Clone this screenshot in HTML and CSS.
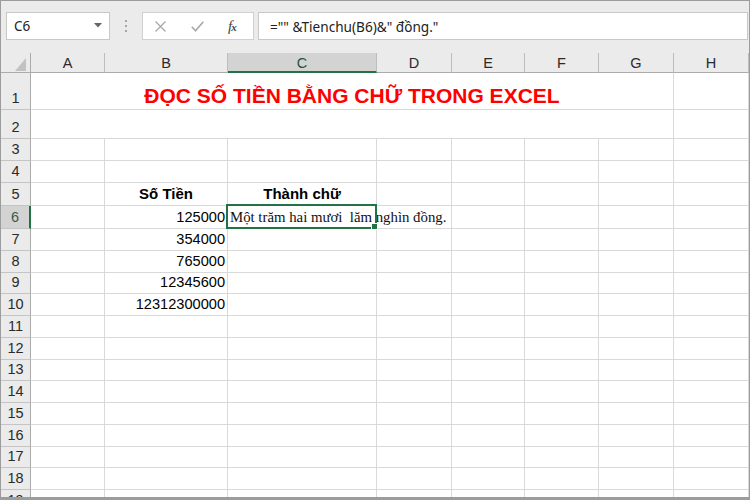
FILE: index.html
```html
<!DOCTYPE html>
<html lang="vi">
<head>
<meta charset="utf-8">
<title>Excel</title>
<link rel="stylesheet" href="styles.css">
</head>
<body>
<div class="app">
  <div class="toolbar">
    <div class="namebox"><span>C6</span><svg class="dd" width="8" height="5" viewBox="0 0 8 5"><polygon points="0,0 8,0 4,4.5" fill="#666"/></svg></div>
    <div class="grip"><i></i><i></i><i></i></div>
    <div class="fbtns">
      <svg width="11" height="11" viewBox="0 0 11 11"><path d="M0.5 0.5 L10.5 10.5 M10.5 0.5 L0.5 10.5" stroke="#a8a8a8" stroke-width="1.3" fill="none"/></svg>
      <svg width="13" height="11" viewBox="0 0 13 11"><path d="M0.8 5.8 L4.5 9.8 L12.3 0.8" stroke="#a8a8a8" stroke-width="1.6" fill="none"/></svg>
      <span class="fx">f<small>x</small></span>
    </div>
    <div class="finput">="" &amp;Tienchu(B6)&amp;" đồng."</div>
  </div>
  <div class="sheet">
    <div class="corner"><svg width="29" height="19" viewBox="0 0 29 19"><polygon points="25,5 25,18 14,18" fill="#c2c2c2"/></svg></div>
    <div class="ch">A</div><div class="ch">B</div><div class="ch on">C</div><div class="ch">D</div><div class="ch">E</div><div class="ch">F</div><div class="ch">G</div><div class="ch">H</div>

    <div class="rh">1</div><div class="c title">ĐỌC SỐ TIỀN BẰNG CHỮ TRONG EXCEL</div><div class="c"></div>
    <div class="rh">2</div><div class="c span7"></div><div class="c"></div>

    <div class="rh">3</div><div class="c"></div><div class="c"></div><div class="c"></div><div class="c"></div><div class="c"></div><div class="c"></div><div class="c"></div><div class="c"></div>
    <div class="rh">4</div><div class="c"></div><div class="c"></div><div class="c"></div><div class="c"></div><div class="c"></div><div class="c"></div><div class="c"></div><div class="c"></div>
    <div class="rh">5</div><div class="c"></div><div class="c hd">Số Tiền</div><div class="c hd">Thành chữ</div><div class="c"></div><div class="c"></div><div class="c"></div><div class="c"></div><div class="c"></div>
    <div class="rh on">6</div><div class="c"></div><div class="c num">125000</div><div class="c sel">Một trăm hai mươi  lăm nghìn đồng.</div><div class="c"></div><div class="c"></div><div class="c"></div><div class="c"></div><div class="c"></div>
    <div class="rh">7</div><div class="c"></div><div class="c num">354000</div><div class="c"></div><div class="c"></div><div class="c"></div><div class="c"></div><div class="c"></div><div class="c"></div>
    <div class="rh">8</div><div class="c"></div><div class="c num">765000</div><div class="c"></div><div class="c"></div><div class="c"></div><div class="c"></div><div class="c"></div><div class="c"></div>
    <div class="rh">9</div><div class="c"></div><div class="c num">12345600</div><div class="c"></div><div class="c"></div><div class="c"></div><div class="c"></div><div class="c"></div><div class="c"></div>
    <div class="rh">10</div><div class="c"></div><div class="c num">12312300000</div><div class="c"></div><div class="c"></div><div class="c"></div><div class="c"></div><div class="c"></div><div class="c"></div>
    <div class="rh">11</div><div class="c"></div><div class="c"></div><div class="c"></div><div class="c"></div><div class="c"></div><div class="c"></div><div class="c"></div><div class="c"></div>
    <div class="rh">12</div><div class="c"></div><div class="c"></div><div class="c"></div><div class="c"></div><div class="c"></div><div class="c"></div><div class="c"></div><div class="c"></div>
    <div class="rh">13</div><div class="c"></div><div class="c"></div><div class="c"></div><div class="c"></div><div class="c"></div><div class="c"></div><div class="c"></div><div class="c"></div>
    <div class="rh">14</div><div class="c"></div><div class="c"></div><div class="c"></div><div class="c"></div><div class="c"></div><div class="c"></div><div class="c"></div><div class="c"></div>
    <div class="rh">15</div><div class="c"></div><div class="c"></div><div class="c"></div><div class="c"></div><div class="c"></div><div class="c"></div><div class="c"></div><div class="c"></div>
    <div class="rh">16</div><div class="c"></div><div class="c"></div><div class="c"></div><div class="c"></div><div class="c"></div><div class="c"></div><div class="c"></div><div class="c"></div>
    <div class="rh">17</div><div class="c"></div><div class="c"></div><div class="c"></div><div class="c"></div><div class="c"></div><div class="c"></div><div class="c"></div><div class="c"></div>
    <div class="rh">18</div><div class="c"></div><div class="c"></div><div class="c"></div><div class="c"></div><div class="c"></div><div class="c"></div><div class="c"></div><div class="c"></div>
    <div class="rh">19</div><div class="c"></div><div class="c"></div><div class="c"></div><div class="c"></div><div class="c"></div><div class="c"></div><div class="c"></div><div class="c"></div>
  </div>
</div>
</body>
</html>
```

FILE: styles.css
```css
html, body {
  margin: 0;
  padding: 0;
  background: #ffffff;
}

.app {
  width: 750px;
  height: 500px;
  box-sizing: border-box;
  border: 1px solid #9c9c9c;
  border-bottom-width: 3px;
  background: #ebebeb;
  overflow: hidden;
  display: flex;
  flex-direction: column;
}

/* ---------- formula bar ---------- */
.toolbar {
  flex: none;
  height: 52px;
  box-sizing: border-box;
  padding: 11px 1px 0 5px;
  display: flex;
  align-items: flex-start;
  font-family: "Noto Sans", "Open Sans", sans-serif;
  font-size: 13.6px;
  color: #222;
}

.namebox {
  width: 104px;
  height: 28px;
  box-sizing: border-box;
  background: #fff;
  border: 1px solid #c8c8c8;
  display: flex;
  align-items: center;
  justify-content: space-between;
  padding: 0 7px 0 7px;
  font-size: 13.5px;
}

.namebox .dd {
  display: block;
  margin-top: -1px;
}

.grip {
  margin-left: 15px;
  width: 2px;
  height: 28px;
  display: flex;
  flex-direction: column;
  justify-content: center;
  gap: 3px;
}

.grip i {
  display: block;
  width: 2px;
  height: 2px;
  background: #a6a6a6;
}

.fbtns {
  margin-left: 15px;
  width: 112px;
  height: 28px;
  box-sizing: border-box;
  background: #fff;
  border: 1px solid #d0d0d0;
  display: flex;
  align-items: center;
  padding-left: 12px;
  gap: 25px;
}

.fbtns svg {
  display: block;
}

.fx {
  font-family: "Liberation Serif", serif;
  font-style: italic;
  font-size: 15px;
  color: #444;
  margin-left: -1px;
  letter-spacing: -1px;
}

.fx small {
  font-size: 11px;
  font-weight: bold;
}

.finput {
  margin-left: 4px;
  flex: 1;
  height: 28px;
  box-sizing: border-box;
  background: #fff;
  border: 1px solid #c8c8c8;
  display: flex;
  align-items: center;
  padding-left: 11px;
  white-space: pre;
}

/* ---------- sheet ---------- */
.sheet {
  flex: 1;
  min-height: 0;
  overflow: hidden;
  background: #fff;
  display: grid;
  grid-template-columns: 30px 74px 123px 149px 75px 73px 74px 75px 75px;
  grid-template-rows: 20px 37px 29px 22px 22px 23px 23px;
  grid-auto-rows: 21.77px;
  font-family: "Liberation Sans", Arial, sans-serif;
}

.corner {
  background: #ebebeb;
  border-right: 1px solid #ababab;
  border-bottom: 1px solid #ababab;
  box-sizing: border-box;
}

.corner svg {
  display: block;
}

.ch {
  background: #ebebeb;
  border-right: 1px solid #bdbdbd;
  border-bottom: 1px solid #ababab;
  box-sizing: border-box;
  display: flex;
  align-items: center;
  justify-content: center;
  font-size: 14.5px;
  color: #2a2a2a;
  padding-top: 1px;
}

.ch.on {
  background: #d3d3d3;
  border-bottom: 2px solid #217346;
  color: #1f5436;
}

.rh {
  background: #ebebeb;
  border-right: 1px solid #ababab;
  border-bottom: 1px solid #c4c4c4;
  box-sizing: border-box;
  display: flex;
  align-items: flex-end;
  justify-content: center;
  padding-bottom: 1px;
  font-size: 14.5px;
  line-height: 20px;
  color: #2a2a2a;
}

.rh.on {
  background: #d3d3d3;
  border-right: 2px solid #217346;
  color: #3a5a48;
}

.c {
  border-right: 1px solid #d9d9d9;
  border-bottom: 1px solid #d9d9d9;
  box-sizing: border-box;
  min-width: 0;
  display: flex;
  align-items: flex-end;
  padding: 0 2px 1px 2px;
  font-size: 14.6px;
  line-height: 20px;
  white-space: pre;
  color: #000;
}

.num {
  justify-content: flex-end;
}

.hd {
  justify-content: center;
  font-weight: bold;
  font-size: 15px;
}

.title {
  grid-column: span 7;
  justify-content: center;
  padding-bottom: 0;
  color: #ff0000;
  font-weight: bold;
  font-size: 21px;
  line-height: 26px;
}

.span7 {
  grid-column: span 7;
}

.sel {
  position: relative;
  font-family: "Liberation Serif", "Times New Roman", serif;
  font-size: 14.8px;
  color: #111;
}

.sel::before {
  content: "";
  position: absolute;
  left: -2px;
  top: -2px;
  right: -1px;
  bottom: -1px;
  border: 2px solid #217346;
}

.sel::after {
  content: "";
  position: absolute;
  right: -2px;
  bottom: -2px;
  width: 5px;
  height: 5px;
  background: #217346;
  border: 1px solid #fff;
}
```
